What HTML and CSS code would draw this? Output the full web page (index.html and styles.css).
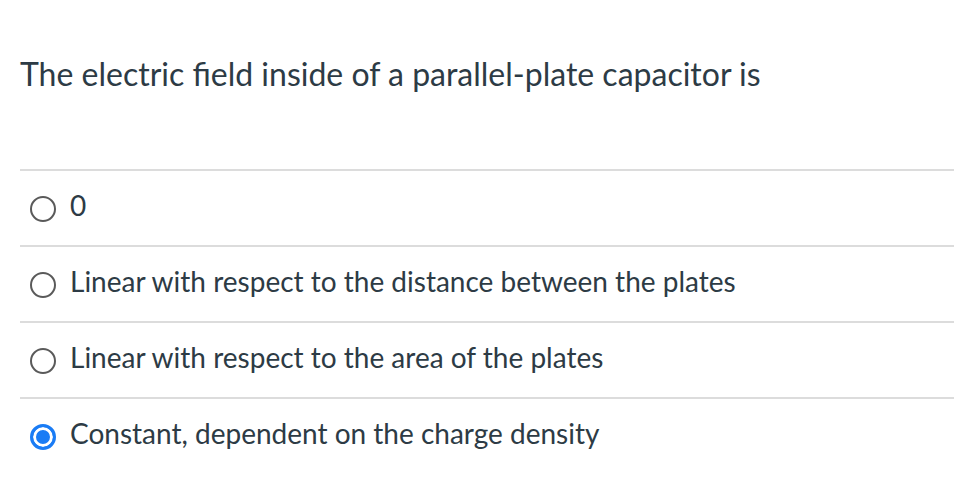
FILE: index.html
```html
<!DOCTYPE html>
<html>
<head>
<meta charset="utf-8">
<link rel="stylesheet" href="styles.css">
</head>
<body>
<div class="quiz">
  <p class="question">The electric field inside of a parallel-plate capacitor is</p>
  <div class="answers">
    <label class="answer"><span class="radio"></span><span class="text">0</span></label>
    <label class="answer"><span class="radio"></span><span class="text">Linear with respect to the distance between the plates</span></label>
    <label class="answer"><span class="radio"></span><span class="text">Linear with respect to the area of the plates</span></label>
    <label class="answer"><span class="radio checked"></span><span class="text">Constant, dependent on the charge density</span></label>
  </div>
</div>
</body>
</html>
```
FILE: styles.css
```css
html, body {
  margin: 0;
  padding: 0;
  background: #fff;
}
.quiz {
  font-family: Lato, "Noto Sans", sans-serif;
  color: #2d3b45;
  padding-left: 20px;
}
.question {
  margin: 0;
  padding-top: 52px;
  height: 169px;
  font-size: 32px;
  line-height: 44px;
  box-sizing: border-box;
}
.answers {
  display: flex;
  flex-direction: column;
}
.answer {
  display: flex;
  align-items: center;
  height: 76px;
  box-sizing: border-box;
  border-top: 2px solid #dcdcdc;
  padding-left: 10px;
  font-size: 28px;
}
.radio {
  width: 26px;
  height: 26px;
  box-sizing: border-box;
  border: 2px solid #5a5a5a;
  border-radius: 50%;
  margin-right: 14px;
  flex: none;
  position: relative;
  top: 1px;
}
.radio.checked {
  border: 3px solid #1a7cf5;
  background: #1a7cf5;
  box-shadow: inset 0 0 0 3px #fff;
}
.text {
  line-height: 32px;
  position: relative;
  top: -3px;
}
```
